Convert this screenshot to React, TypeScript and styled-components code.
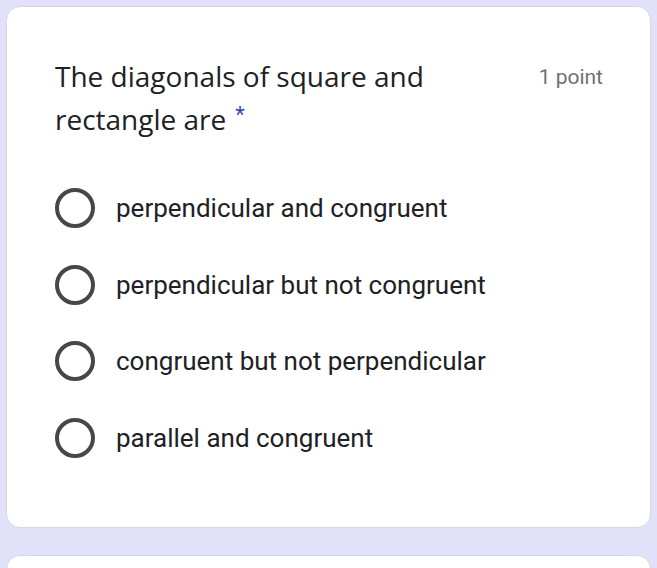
import styled, { createGlobalStyle } from "styled-components";

const GlobalStyle = createGlobalStyle`
  html, body {
    margin: 0;
    padding: 0;
    background: #e1e1f9;
  }
  body {
    font-family: Roboto, "Liberation Sans", sans-serif;
  }
`;

const Page = styled.div`
  display: flex;
  flex-direction: column;
  gap: 27px;
  padding: 6px 6px 0 6px;
  height: 568px;
  overflow: hidden;
  box-sizing: border-box;
`;

const Card = styled.section<{ $height: number }>`
  flex: none;
  height: ${({ $height }) => $height}px;
  box-sizing: border-box;
  background: #ffffff;
  border: 1px solid #d6d7e2;
  border-radius: 14px;
  padding: 48px 47px 0 48px;
`;

const Header = styled.div`
  display: flex;
  justify-content: space-between;
  align-items: flex-start;
  gap: 24px;
`;

const Title = styled.h2`
  margin: 0;
  width: 400px;
  font-family: "Open Sans", Roboto, sans-serif;
  font-weight: 400;
  font-size: 28px;
  line-height: 43px;
  color: #202124;
`;

const Required = styled.span`
  color: #3a46b0;
  margin-left: 9px;
  font-family: Roboto, sans-serif;
  font-size: 22px;
  line-height: 0;
  vertical-align: 8px;
`;

const Points = styled.span`
  margin-top: 10px;
  font-family: Roboto, sans-serif;
  font-size: 21px;
  color: #717171;
  white-space: nowrap;
`;

const Options = styled.ul`
  list-style: none;
  margin: 47px 0 0 0;
  padding: 0;
  display: flex;
  flex-direction: column;
  gap: 36.5px;
`;

const Option = styled.li`
  display: flex;
  align-items: center;
  gap: 21px;
  height: 40px;
`;

const Radio = styled.span`
  flex: none;
  width: 40px;
  height: 40px;
  box-sizing: border-box;
  border: 4px solid #474747;
  border-radius: 50%;
`;

const Label = styled.span`
  font-family: Roboto, sans-serif;
  font-size: 26px;
  color: #202124;
`;

const choices = [
  "perpendicular and congruent",
  "perpendicular but not congruent",
  "congruent but not perpendicular",
  "parallel and congruent",
];

export default function App() {
  return (
    <>
      <GlobalStyle />
      <Page>
        <Card $height={522}>
          <Header>
            <Title>
              The diagonals of square and rectangle are
              <Required>*</Required>
            </Title>
            <Points>1 point</Points>
          </Header>
          <Options>
            {choices.map((c) => (
              <Option key={c}>
                <Radio />
                <Label>{c}</Label>
              </Option>
            ))}
          </Options>
        </Card>
        <Card $height={120} />
      </Page>
    </>
  );
}
